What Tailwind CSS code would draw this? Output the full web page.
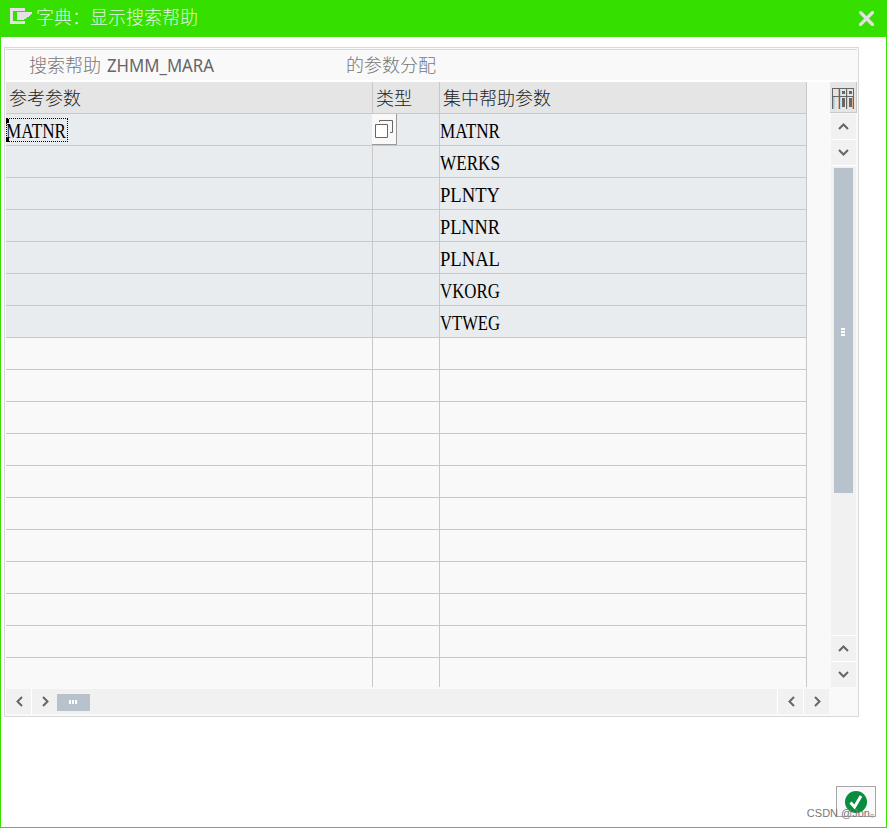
<!DOCTYPE html>
<html lang="zh-CN"><head><meta charset="utf-8"><title>字典：显示搜索帮助</title>
<script src="https://cdn.jsdelivr.net/npm/@tailwindcss/browser@4"></script></head>
<body class="bg-white">
<div class="relative flex h-[828px] w-[887px] flex-col overflow-hidden border border-t-0 border-[#35e000] bg-white font-['Liberation_Sans','Noto_Sans_CJK_SC',sans-serif] font-light">
  <header class="flex h-[37px] shrink-0 items-center bg-[#35e000] pl-[9px] pr-[12px] text-[#e4f4df]">
    <svg class="mb-[5px] h-[16px] w-[22px]" viewBox="0 0 22 16" shape-rendering="crispEdges" fill="#e2e2e2"><path d="M0 0H15V3H3V13H15V16H0Z"/><path d="M7 4H22V6H21V7H20V8H19V9H17V10H16V11H14V12H7Z"/></svg>
    <h1 class="ml-[4px] mb-[2px] whitespace-pre text-[18px] leading-[24px]">字典：显示搜索帮助</h1>
    <svg class="ml-auto h-[15px] w-[15px]" viewBox="0 0 15 15"><path d="M1.5 1.5L13.5 13.5M13.5 1.5L1.5 13.5" stroke="#e2e2e2" stroke-width="3.2" stroke-linecap="square"/></svg>
  </header>
  <main class="ml-[3px] mt-[10px] flex h-[670px] w-[855px] shrink-0 flex-col border border-[#d9d9d9] bg-[#f9f9f9] pl-px pt-px">
    <div class="flex h-[33px] w-[851px] shrink-0 items-center border-b-2 border-t border-b-white border-t-[#d9d9d9] pl-[23px] pt-[2px] text-[18px] leading-[24px] text-[#777]">
      <span class="w-[78px]">搜索帮助</span>
      <svg class="h-[24px] w-[110px] overflow-visible"><text x="0" y="18" textLength="107" lengthAdjust="spacingAndGlyphs" class="fill-[#666] font-['Noto_Sans'] text-[17.5px] font-normal">ZHMM_MARA</text></svg>
      <span class="ml-[129px]">的参数分配</span>
    </div>
    <div class="flex h-[606px] shrink-0">
      <section id="table" class="w-[801px]">
        <div class="grid h-8 grid-cols-[367px_67px_367px] border-b border-[#c8c8c8] bg-[#e5e5e5] text-[18px] leading-[34px] text-[#222]">
          <div class="border-r border-[#c8c8c8] pl-[3px]">参考参数</div>
          <div class="border-r border-[#c8c8c8] pl-[3px]">类型</div>
          <div class="border-r border-[#c8c8c8] pl-[3px]">集中帮助参数</div>
        </div>
      </section>
      <aside class="ml-[23px] flex w-[27px] flex-col items-center">
        <div class="flex h-[31px] w-[27px] shrink-0 items-center justify-center border-b border-r border-[#c8c8c8] bg-[#e5e5e5]">
          <svg class="mt-[3px] h-[21px] w-[22px]" viewBox="0 0 22 21" fill="none" stroke="#666"><path d="M1.500 9V21M6.500 1V21M20.500 9V21" stroke="#dfb18c"/><path d="M2.500 9V21M15.500 2V21M8.500 2V21" stroke="#b5d5e8"/><path d="M.5 .5V21M7.500 1V21M14.500 1V21M21.500 1V21M0 .5H22M0 8.500H22"/><path fill="#666" stroke="none" d="M10 3H13V6H10ZM17 3H20V6H17ZM10 10H13V19H10ZM17 10H20V19H17Z"/></svg>
        </div>
        <div class="mt-px flex h-[26px] w-[25px] shrink-0 items-center justify-center border-b border-white bg-[#f1f1f1]"><svg class="h-[7px] w-[11px]" viewBox="0 0 11 7"><path d="M1 6L5.5 1.5L10 6" fill="none" stroke="#666" stroke-width="2"/></svg></div>
        <div class="flex h-[26px] w-[25px] shrink-0 items-center justify-center border-b border-white bg-[#f1f1f1]"><svg class="h-[7px] w-[11px]" viewBox="0 0 11 7"><path d="M1 1L5.5 5.5L10 1" fill="none" stroke="#666" stroke-width="2"/></svg></div>
        <div class="flex w-[25px] flex-1 justify-center bg-[#f1f1f1] pt-[2px]">
          <div class="flex h-[325px] w-[19px] flex-col items-center justify-center gap-px bg-[#b7c2cd] pr-px pt-[2px]"><i class="h-[2px] w-[4px] bg-white"></i><i class="h-[2px] w-[4px] bg-white"></i><i class="h-[2px] w-[4px] bg-white"></i></div>
        </div>
        <div class="flex h-[26px] w-[25px] shrink-0 items-center justify-center border-t border-white bg-[#f1f1f1]"><svg class="h-[7px] w-[11px]" viewBox="0 0 11 7"><path d="M1 6L5.5 1.5L10 6" fill="none" stroke="#666" stroke-width="2"/></svg></div>
        <div class="mb-px flex h-[26px] w-[25px] shrink-0 items-center justify-center border-t border-white bg-[#f1f1f1]"><svg class="h-[7px] w-[11px]" viewBox="0 0 11 7"><path d="M1 1L5.5 5.5L10 1" fill="none" stroke="#666" stroke-width="2"/></svg></div>
      </aside>
    </div>
    <div class="mt-px flex h-[25px] w-[823px] shrink-0 items-center bg-[#f1f1f1]">
      <div class="flex h-[25px] w-[26px] items-center justify-center border-r border-white"><svg class="ml-px h-[11px] w-[7px]" viewBox="0 0 7 11"><path d="M6 1L1.5 5.5L6 10" fill="none" stroke="#666" stroke-width="2"/></svg></div>
      <div class="flex h-[25px] w-[25px] items-center justify-center"><svg class="ml-px h-[11px] w-[7px]" viewBox="0 0 7 11"><path d="M1 1L5.5 5.5L1 10" fill="none" stroke="#666" stroke-width="2"/></svg></div>
      <div class="mt-[2px] flex h-[17px] w-[33px] items-center justify-center gap-px bg-[#b7c2cd] pr-px"><i class="mb-px h-[4px] w-[2px] bg-white"></i><i class="mb-px h-[4px] w-[2px] bg-white"></i><i class="mb-px h-[4px] w-[2px] bg-white"></i></div>
      <div class="ml-auto flex h-[25px] w-[26px] items-center justify-center border-l border-white"><svg class="ml-[2px] h-[11px] w-[7px]" viewBox="0 0 7 11"><path d="M6 1L1.5 5.5L6 10" fill="none" stroke="#666" stroke-width="2"/></svg></div>
      <div class="flex h-[25px] w-[26px] items-center justify-center border-l border-white"><svg class="ml-[2px] h-[11px] w-[7px]" viewBox="0 0 7 11"><path d="M1 1L5.5 5.5L1 10" fill="none" stroke="#666" stroke-width="2"/></svg></div>
    </div>
  </main>
  <footer class="relative mt-[69px] flex justify-end pr-[10px]">
    <button class="flex h-[31px] w-[40px] items-center justify-center border border-[#a6a6a6] bg-[#f9f9f9]"><svg class="h-[22px] w-[22px]" viewBox="0 0 22 22"><circle cx="11" cy="11" r="11" fill="#078d3d"/><path d="M5.5 11.5L9.5 16L16 5" fill="none" stroke="white" stroke-width="3"/></svg></button>
    <span class="absolute right-[5px] top-[19px] whitespace-nowrap text-[11px] leading-[16px] text-[#777]">CSDN @Jon。</span>
  </footer>
</div>
<script>
const table = document.getElementById('table');
const word = t => `<svg class="h-[31px] w-[62px] overflow-visible"><text x="0" y="24" textLength="60" lengthAdjust="spacingAndGlyphs" class="fill-black font-['Liberation_Serif'] text-[22px] font-normal">${t}</text></svg>`;
const names = ['MATNR','WERKS','PLNTY','PLNNR','PLNAL','VKORG','VTWEG'];
for (let i = 0; i < 18; i++) {
  const row = document.createElement('div');
  row.className = 'grid grid-cols-[367px_67px_367px] ' + (i < 7 ? 'h-8 border-b border-[#c8c8c8] bg-[#e8ecef]' : i < 17 ? 'h-8 border-b border-[#c8c8c8]' : 'h-[29px]');
  row.innerHTML = `<div class="relative border-r border-[#c8c8c8]">${i ? '' : word('MATNR') + '<i class="absolute left-0 top-[4px] h-[24px] w-[62px] border border-dotted border-black"></i><i class="absolute left-0 top-[5px] h-[4px] w-[3px] bg-black"></i><i class="absolute left-0 top-[24px] h-[4px] w-[3px] bg-black"></i>'}</div>
  <div class="relative border-r border-[#c8c8c8]">${i ? '' : '<div class="absolute -left-px top-0 h-[31px] w-[25px] border-b border-r border-[#999] bg-[#f9f9f9]"><svg class="h-[30px] w-[24px]" viewBox="0 0 24 30" fill="none" stroke="#666"><path d="M7.500 8V6.500H20.500V18.500H18"/><path d="M3.500 10.500H15.500V23.500H3.500Z" fill="white"/></svg></div>'}</div>
  <div class="border-r border-[#c8c8c8]">${i < 7 ? word(names[i]) : ''}</div>`;
  table.append(row);
}
</script>
</body></html>
